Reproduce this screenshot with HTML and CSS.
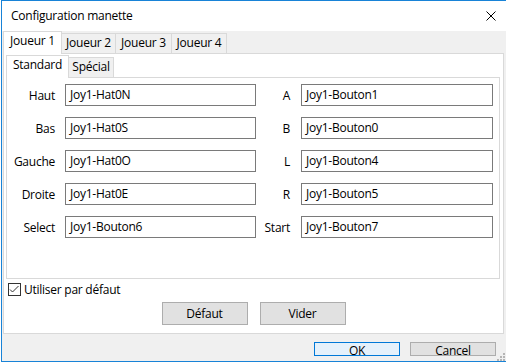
FILE: index.html
```html
<!DOCTYPE html>
<html>
<head>
<meta charset="utf-8">
<link rel="stylesheet" href="styles.css">
</head>
<body>
<div class="window">
  <div class="titlebar">
    <span class="title">Configuration manette</span>
    <svg class="close" width="10" height="10" viewBox="0 0 10 10"><path d="M0.5 0.5L9.5 9.5M9.5 0.5L0.5 9.5" stroke="#000" stroke-width="1" fill="none"/></svg>
  </div>
  <div class="client">
    <div class="tabs">
      <div class="tab sel w-j1">Joueur 1</div>
      <div class="tab w-j2">Joueur 2</div>
      <div class="tab w-j3">Joueur 3</div>
      <div class="tab w-j4">Joueur 4</div>
    </div>
    <div class="panel outer-panel">
      <div class="tabs">
        <div class="tab sel w-std">Standard</div>
        <div class="tab w-spe">Spécial</div>
      </div>
      <div class="panel inner-panel">
        <div class="grid">
          <div class="lbl">Haut</div><div class="field">Joy1-Hat0N</div>
          <div class="lbl r">A</div><div class="field">Joy1-Bouton1</div>
          <div class="lbl">Bas</div><div class="field">Joy1-Hat0S</div>
          <div class="lbl r">B</div><div class="field">Joy1-Bouton0</div>
          <div class="lbl">Gauche</div><div class="field">Joy1-Hat0O</div>
          <div class="lbl r">L</div><div class="field">Joy1-Bouton4</div>
          <div class="lbl">Droite</div><div class="field">Joy1-Hat0E</div>
          <div class="lbl r">R</div><div class="field">Joy1-Bouton5</div>
          <div class="lbl">Select</div><div class="field">Joy1-Bouton6</div>
          <div class="lbl r">Start</div><div class="field">Joy1-Bouton7</div>
        </div>
      </div>
      <div class="check-row">
        <svg class="checkbox" width="13" height="13" viewBox="0 0 13 13"><rect x="0.5" y="0.5" width="12" height="12" fill="#fff" stroke="#333"/><path d="M2 6.5L4.5 9L10.5 3" stroke="#333" stroke-width="1" fill="none"/></svg>
        <span class="check-label">Utiliser par défaut</span>
      </div>
      <div class="btn-row">
        <div class="btn">Défaut</div>
        <div class="btn">Vider</div>
      </div>
    </div>
    <div class="footer">
      <div class="btn small ok">OK</div>
      <div class="btn small">Cancel</div>
    </div>
  </div>
  <svg class="grip" width="8" height="8" viewBox="0 0 8 8">
    <rect x="6" y="0" width="2" height="2" fill="#b5b5b5"/>
    <rect x="3" y="3" width="2" height="2" fill="#b5b5b5"/>
    <rect x="6" y="3" width="2" height="2" fill="#b5b5b5"/>
    <rect x="0" y="6" width="2" height="2" fill="#b5b5b5"/>
    <rect x="3" y="6" width="2" height="2" fill="#b5b5b5"/>
    <rect x="6" y="6" width="2" height="2" fill="#b5b5b5"/>
  </svg>
</div>
</body>
</html>
```
FILE: styles.css
```css
html, body {
  margin: 0;
  padding: 0;
  width: 506px;
  height: 363px;
  overflow: hidden;
  background: #ffffff;
}
body {
  font-family: "Open Sans", "Noto Sans", sans-serif;
  font-size: 12px;
  color: #000;
}
.window {
  margin-left: 1px;
  width: 505px;
  height: 362px;
  box-sizing: border-box;
  border-top: 1px solid #1883d7;
  border-left: 1px solid #1883d7;
  border-bottom: 1px solid #1883d7;
  background: #f0f0f0;
  position: relative;
  display: flex;
  flex-direction: column;
}
.titlebar {
  height: 30px;
  flex: none;
  background: #fff;
  display: flex;
  align-items: center;
  padding-left: 9px;
}
.title {
  line-height: 16px;
  letter-spacing: -0.25px;
}
.close {
  margin-left: auto;
  margin-right: 10px;
  display: block;
}
.client {
  flex: 1;
  padding-left: 1px;
  display: flex;
  flex-direction: column;
}
.tabs {
  display: flex;
  align-items: flex-end;
  height: 22px;
  flex: none;
}
.tab {
  box-sizing: border-box;
  height: 20px;
  border: 1px solid #d9d9d9;
  border-bottom: none;
  background: #f0f0f0;
  margin-left: -1px;
  padding-top: 1px;
  line-height: 16px;
  text-align: center;
  white-space: nowrap;
  letter-spacing: -0.25px;
}
.tab:first-child {
  margin-left: 0;
}
.tab.sel {
  height: 23px;
  background: #fff;
  margin-bottom: -1px;
  position: relative;
  z-index: 1;
}
.w-j1 { width: 59px; }
.w-j2 { width: 55px; }
.w-j3 { width: 57px; }
.w-j4 { width: 56px; }
.w-std { width: 63px; }
.w-spe { width: 46px; }
.panel {
  box-sizing: border-box;
  border: 1px solid #d9d9d9;
  background: #fff;
}
.outer-panel {
  width: 501px;
  height: 281px;
  flex: none;
  padding: 1px 0 0 2px;
  display: flex;
  flex-direction: column;
}
.inner-panel {
  width: 494px;
  height: 202px;
  flex: none;
  padding-top: 6px;
}
.grid {
  display: grid;
  grid-template-columns: 58px 191px 45px 192px;
  grid-auto-rows: 22px;
  row-gap: 11px;
}
.lbl {
  display: flex;
  align-items: center;
  justify-content: flex-end;
  padding-right: 10px;
  letter-spacing: -0.25px;
}
.lbl.r {
  padding-right: 11px;
}
.field {
  box-sizing: border-box;
  border: 1px solid #7a7a7a;
  background: #fff;
  padding-left: 4px;
  line-height: 20px;
  letter-spacing: -0.25px;
  white-space: nowrap;
}
.check-row {
  display: flex;
  align-items: center;
  height: 13px;
  margin-top: 4px;
  margin-left: 2px;
}
.checkbox {
  display: block;
  flex: none;
}
.check-label {
  margin-left: 3px;
  line-height: 16px;
  letter-spacing: -0.25px;
}
.btn-row {
  display: flex;
  justify-content: center;
  gap: 12px;
  margin-top: 6px;
  margin-left: -2px;
}
.btn {
  box-sizing: border-box;
  width: 86px;
  height: 23px;
  border: 1px solid #adadad;
  background: #e1e1e1;
  text-align: center;
  line-height: 21px;
  letter-spacing: -0.25px;
}
.footer {
  display: flex;
  justify-content: flex-end;
  gap: 10px;
  padding-right: 10px;
  padding-top: 8px;
}
.btn.small {
  height: 14px;
  line-height: 12px;
  padding-top: 2px;
}
.btn.ok {
  border-color: #0078d7;
  background: #e5f1fb;
}
.grip {
  position: absolute;
  left: 495px;
  top: 352px;
  display: block;
}
```
